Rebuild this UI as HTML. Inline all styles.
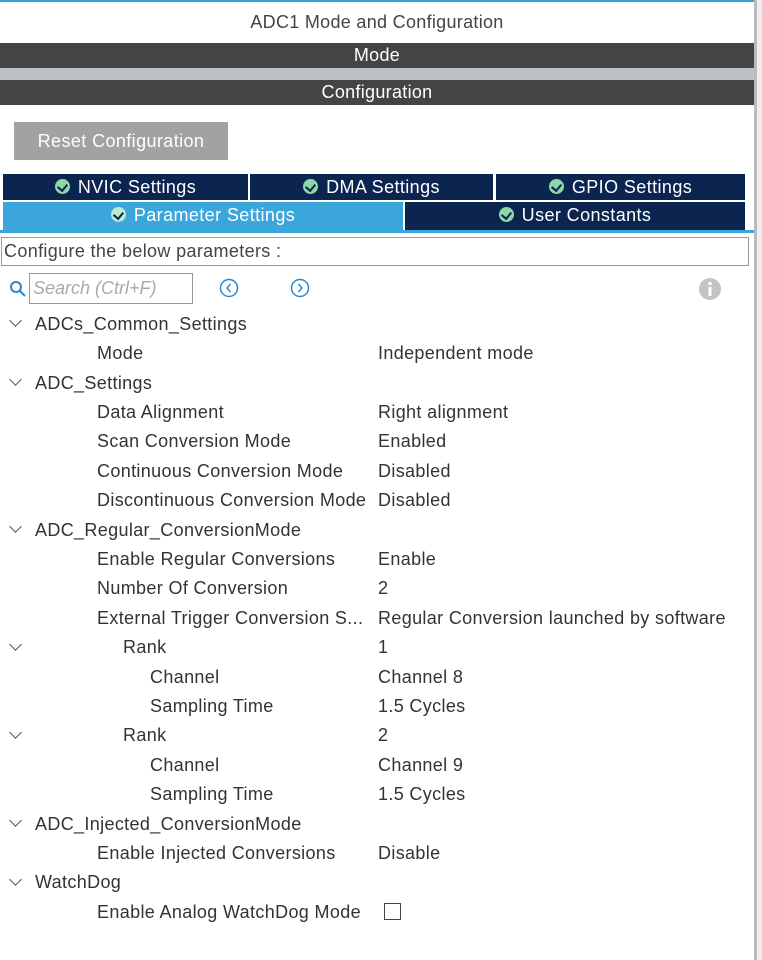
<!DOCTYPE html>
<html><head><meta charset="utf-8"><style>
*{margin:0;padding:0;box-sizing:border-box}
body{width:762px;height:960px;background:#fff;font-family:"Liberation Sans",sans-serif;color:#333;position:relative;overflow:hidden}
.a{position:absolute;white-space:nowrap}
.bar{position:absolute;left:0;width:754px;background:#444;color:#fff;text-align:center;font-size:18px;letter-spacing:0.3px}
.tab{position:absolute;height:26px;background:#0b2550;color:#fff;font-size:18px;text-align:center;line-height:26px;letter-spacing:0.4px}
.ck{display:inline-block;width:15px;height:15px;border-radius:50%;background:#8fd7a8;vertical-align:-1px;margin-right:8px;position:relative}
.ck:after{content:"";position:absolute;left:4px;top:3px;width:5px;height:7px;border:solid #0b2550;border-width:0 2px 2px 0;transform:rotate(40deg)}
.r{position:absolute;font-size:18px;color:#333;white-space:nowrap;line-height:20px;letter-spacing:0.35px}
.chev{position:absolute;left:11px;width:9px;height:9px;border:solid #555;border-width:0 1.3px 1.3px 0;transform:rotate(45deg)}
</style></head><body>
<div class="a" style="left:0;top:0;width:754px;height:2px;background:#3aa0d8"></div>
<div class="a" style="left:754px;top:0;width:3px;height:960px;background:#bbb"></div>
<div class="a" style="left:757px;top:0;width:5px;height:960px;background:#eee"></div>
<div class="a" style="left:0;top:12px;width:754px;text-align:center;font-size:18px;color:#444;letter-spacing:0.3px">ADC1 Mode and Configuration</div>
<div class="bar" style="top:43px;height:25px;line-height:25px">Mode</div>
<div class="a" style="left:0;top:68px;width:754px;height:12px;background:#bcc3c8"></div>
<div class="bar" style="top:80px;height:25px;line-height:25px">Configuration</div>
<div class="a" style="left:14px;top:122px;width:214px;height:38px;background:#a0a2a4;color:#fff;font-size:18px;text-align:center;line-height:38px;letter-spacing:0.4px">Reset Configuration</div>
<div class="tab" style="left:3px;top:174px;width:245px"><span class="ck"></span>NVIC Settings</div>
<div class="tab" style="left:250px;top:174px;width:243px"><span class="ck"></span>DMA Settings</div>
<div class="tab" style="left:496px;top:174px;width:249px"><span class="ck"></span>GPIO Settings</div>
<div class="tab" style="left:3px;top:202px;width:400px;height:29px;background:#3aa6dc"><span class="ck" style="background:#bfe9cf"></span>Parameter Settings</div>
<div class="tab" style="left:405px;top:202px;width:340px;height:29px"><span class="ck"></span>User Constants</div>
<div class="a" style="left:0;top:230px;width:754px;height:3px;background:#3aa6dc"></div>
<div class="a" style="left:1px;top:237px;width:748px;height:29px;border:1px solid #999;font-size:18px;line-height:27px;padding-left:2px;color:#444;letter-spacing:0.35px">Configure the below parameters :</div>
<svg class="a" style="left:9px;top:280px" width="18" height="18"><circle cx="7" cy="7" r="5" fill="none" stroke="#2a8ad0" stroke-width="2"/><line x1="11" y1="11" x2="16" y2="16" stroke="#2a8ad0" stroke-width="2"/></svg>
<div class="a" style="left:29px;top:273px;width:164px;height:31px;border:1px solid #999;font-size:18px;font-style:italic;color:#aaa;line-height:29px;padding-left:3px">Search (Ctrl+F)</div>
<svg class="a" style="left:219px;top:278px" width="20" height="20"><circle cx="10" cy="10" r="8.5" fill="none" stroke="#2a8ad0" stroke-width="1.5"/><path d="M11.5 6 L8 10 L11.5 14" fill="none" stroke="#2a8ad0" stroke-width="1.5"/></svg>
<svg class="a" style="left:290px;top:278px" width="20" height="20"><circle cx="10" cy="10" r="8.5" fill="none" stroke="#2a8ad0" stroke-width="1.5"/><path d="M8.5 6 L12 10 L8.5 14" fill="none" stroke="#2a8ad0" stroke-width="1.5"/></svg>
<svg class="a" style="left:698px;top:277px" width="24" height="24"><circle cx="12" cy="12" r="11" fill="#c4c4c4"/><rect x="10.5" y="10" width="3" height="9" fill="#fff"/><circle cx="12" cy="6.5" r="1.8" fill="#fff"/></svg>

<div class="chev" style="top:316px"></div><div class="r" style="left:35px;top:314px">ADCs_Common_Settings</div>
<div class="r" style="left:97px;top:343px">Mode</div><div class="r" style="left:378px;top:343px">Independent mode</div>
<div class="chev" style="top:375px"></div><div class="r" style="left:35px;top:373px">ADC_Settings</div>
<div class="r" style="left:97px;top:402px">Data Alignment</div><div class="r" style="left:378px;top:402px">Right alignment</div>
<div class="r" style="left:97px;top:431px">Scan Conversion Mode</div><div class="r" style="left:378px;top:431px">Enabled</div>
<div class="r" style="left:97px;top:461px">Continuous Conversion Mode</div><div class="r" style="left:378px;top:461px">Disabled</div>
<div class="r" style="left:97px;top:490px">Discontinuous Conversion Mode</div><div class="r" style="left:378px;top:490px">Disabled</div>
<div class="chev" style="top:522px"></div><div class="r" style="left:35px;top:520px">ADC_Regular_ConversionMode</div>
<div class="r" style="left:97px;top:549px">Enable Regular Conversions</div><div class="r" style="left:378px;top:549px">Enable</div>
<div class="r" style="left:97px;top:578px">Number Of Conversion</div><div class="r" style="left:378px;top:578px">2</div>
<div class="r" style="left:97px;top:608px">External Trigger Conversion S...</div><div class="r" style="left:378px;top:608px">Regular Conversion launched by software</div>
<div class="chev" style="top:640px"></div><div class="r" style="left:123px;top:637px">Rank</div><div class="r" style="left:378px;top:637px">1</div>
<div class="r" style="left:150px;top:667px">Channel</div><div class="r" style="left:378px;top:667px">Channel 8</div>
<div class="r" style="left:150px;top:696px">Sampling Time</div><div class="r" style="left:378px;top:696px">1.5 Cycles</div>
<div class="chev" style="top:728px"></div><div class="r" style="left:123px;top:725px">Rank</div><div class="r" style="left:378px;top:725px">2</div>
<div class="r" style="left:150px;top:755px">Channel</div><div class="r" style="left:378px;top:755px">Channel 9</div>
<div class="r" style="left:150px;top:784px">Sampling Time</div><div class="r" style="left:378px;top:784px">1.5 Cycles</div>
<div class="chev" style="top:816px"></div><div class="r" style="left:35px;top:814px">ADC_Injected_ConversionMode</div>
<div class="r" style="left:97px;top:843px">Enable Injected Conversions</div><div class="r" style="left:378px;top:843px">Disable</div>
<div class="chev" style="top:875px"></div><div class="r" style="left:35px;top:872px">WatchDog</div>
<div class="r" style="left:97px;top:902px">Enable Analog WatchDog Mode</div>
<div class="a" style="left:384px;top:903px;width:17px;height:17px;border:1.5px solid #444"></div>
</body></html>
